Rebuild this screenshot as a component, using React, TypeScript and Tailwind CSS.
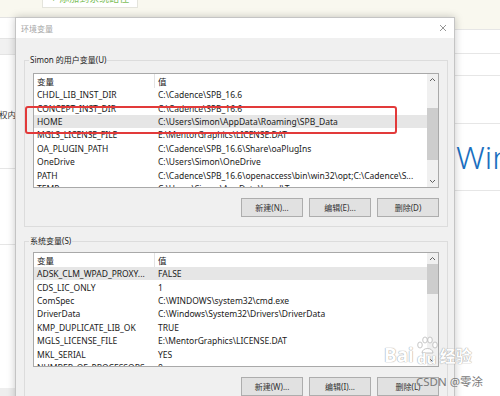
import React from "react";

type Row = [string, string];

const userRows: Row[] = [
  ["CHDL_LIB_INST_DIR", "C:\\Cadence\\SPB_16.6"],
  ["CONCEPT_INST_DIR", "C:\\Cadence\\SPB_16.6"],
  ["HOME", "C:\\Users\\Simon\\AppData\\Roaming\\SPB_Data"],
  ["MGLS_LICENSE_FILE", "E:\\MentorGraphics\\LICENSE.DAT"],
  ["OA_PLUGIN_PATH", "C:\\Cadence\\SPB_16.6\\Share\\oaPlugIns"],
  ["OneDrive", "C:\\Users\\Simon\\OneDrive"],
  ["PATH", "C:\\Cadence\\SPB_16.6\\openaccess\\bin\\win32\\opt;C:\\Cadence\\S..."],
  ["TEMP", "C:\\Users\\Simon\\AppData\\Local\\Temp"],
];

const sysRows: Row[] = [
  ["ADSK_CLM_WPAD_PROXY...", "FALSE"],
  ["CDS_LIC_ONLY", "1"],
  ["ComSpec", "C:\\WINDOWS\\system32\\cmd.exe"],
  ["DriverData", "C:\\Windows\\System32\\Drivers\\DriverData"],
  ["KMP_DUPLICATE_LIB_OK", "TRUE"],
  ["MGLS_LICENSE_FILE", "E:\\MentorGraphics\\LICENSE.DAT"],
  ["MKL_SERIAL", "YES"],
  ["NUMBER_OF_PROCESSORS", "8"],
];

function Chevron({ up }: { up: boolean }) {
  return (
    <svg width="7" height="5" viewBox="0 0 7 5">
      <polyline
        points={up ? "1,4 3.5,1.5 6,4" : "1,1 3.5,3.5 6,1"}
        fill="none"
        stroke="#606060"
        strokeWidth="1"
      />
    </svg>
  );
}

function VarList({
  rows,
  selected,
  thumbClass,
}: {
  rows: Row[];
  selected: number;
  thumbClass: string;
}) {
  return (
    <div className="flex h-[115px] border border-[#a9a9a9] bg-white">
      <div className="min-w-0 flex-1 overflow-hidden">
        <div className="flex h-[14px] items-center">
          <div className="flex h-full w-[121px] shrink-0 items-center border-r border-[#e3e3e3] pl-[3px]">
            变量
          </div>
          <div className="pl-[3px]">值</div>
        </div>
        {rows.map(([k, v], i) => (
          <div
            key={k}
            className={
              i === selected
                ? "flex h-[13.4px] items-center bg-[#e6e6e6]"
                : "flex h-[13.4px] items-center"
            }
          >
            <div className="w-[121px] shrink-0 overflow-hidden whitespace-nowrap pl-[3px]">{k}</div>
            <div className="whitespace-nowrap pl-[3px]">{v}</div>
          </div>
        ))}
      </div>
      <div className="flex w-[11px] shrink-0 flex-col bg-[#f0f0f0]">
        <div className="flex h-[11px] items-center justify-center">
          <Chevron up />
        </div>
        <div className="flex-1">
          <div className={thumbClass} />
        </div>
        <div className="flex h-[11px] items-center justify-center">
          <Chevron up={false} />
        </div>
      </div>
    </div>
  );
}

function Btn({ label }: { label: string }) {
  return (
    <div className="flex h-[19px] w-[62px] items-center justify-center border border-[#adadad] bg-[#e1e1e1] text-[8px] text-[#333]">
      {label}
    </div>
  );
}

export default function App() {
  return (
    <div className="relative h-[396px] w-[500px] overflow-hidden bg-white font-['Noto_Sans','Noto_Sans_CJK_SC',sans-serif] text-[8.5px] leading-[13px] text-[#1a1a1a]">
      {/* top strip of the page behind */}
      <div className="flex h-[17px] bg-[#f9f8ef]">
        <div className="ml-[42px] flex h-[8px] w-[96px] items-end justify-center overflow-hidden border-x border-b border-[#e4e4dc] bg-white pb-[3px]">
          <span className="text-[10px] leading-[12px] text-[#7cc05a]">+ 添加到系统路径</span>
        </div>
      </div>

      {/* page behind the dialog */}
      <div className="flex h-[379px]">
        <div className="flex w-[15px] flex-col border-t border-[#e2e2e2]">
          <div className="h-[20px]" />
          <div className="h-[17px] border-y border-[#e4e4e4] bg-[#f1f1f1]" />
          <div className="h-[53px]" />
          <div className="-ml-[1px] h-[14px] whitespace-nowrap text-[8.5px] text-[#333]">权内容</div>
          <div className="h-[46px]" />
          <div className="h-[76px] border-t border-[#e6e6e6]" />
          <div className="h-[144px] border-t border-[#e6e6e6]" />
          <div className="flex-1 bg-[#eeeeee]" />
        </div>
        <div className="flex-1" />
        <div className="flex w-[45px] flex-col">
          <div className="h-[12px] bg-[#f9f8ef]" />
          <div className="h-[24px] border-t border-[#e6e6e6]" />
          <div className="h-[22px] border-t border-[#e6e6e6]" />
          <div className="h-[48px] border-t border-[#e6e6e6]" />
          <div className="flex h-[67px] items-center overflow-hidden whitespace-nowrap border-t border-[#e6e6e6] pl-[1px] text-[32px] font-light leading-none text-[#1a6fc0]">
            Windows
          </div>
          <div className="flex-1 border-t border-[#e6e6e6]" />
        </div>
      </div>

      {/* dialog window */}
      <div className="absolute left-[15px] top-[17px] flex h-[390px] w-[440px] flex-col border border-[#c4c4c4] bg-[#f0f0f0] shadow-[0_0_8px_rgba(0,0,0,0.22)]">
        <div className="flex h-[20px] shrink-0 items-center justify-between bg-white pl-[5px] pr-[7px]">
          <span className="text-[8px] text-[#a5a5a5]">环境变量</span>
          <svg width="8" height="8" viewBox="0 0 8 8">
            <path d="M1 1 L7 7 M7 1 L1 7" stroke="#8a8a8a" strokeWidth="0.9" />
          </svg>
        </div>

        <div className="flex flex-col pl-[8px] pr-[6px] pt-[16px]">
          <fieldset className="border border-[#dcdcdc] px-0 pb-[9px]">
            <legend className="ml-[4px] px-[1px] text-[8px] leading-[12px] text-[#222]">
              Simon 的用户变量(U)
            </legend>
            <div className="px-[8px] pt-[7px]">
              <VarList rows={userRows} selected={2} thumbClass="mt-[23px] h-[52px] bg-[#cdcdcd]" />
              <div className="mt-[10px] flex justify-end gap-[6px]">
                <Btn label="新建(N)..." />
                <Btn label="编辑(E)..." />
                <Btn label="删除(D)" />
              </div>
            </div>
          </fieldset>

          <fieldset className="mt-[8px] border border-[#dcdcdc] px-0 pb-[9px]">
            <legend className="ml-[4px] px-[1px] text-[8px] leading-[12px] text-[#222]">
              系统变量(S)
            </legend>
            <div className="px-[8px] pt-[5px]">
              <VarList rows={sysRows} selected={0} thumbClass="mt-0 h-[30px] bg-[#cdcdcd]" />
              <div className="mt-[10px] flex justify-end gap-[6px]">
                <Btn label="新建(W)..." />
                <Btn label="编辑(I)..." />
                <Btn label="删除(L)" />
              </div>
            </div>
          </fieldset>
        </div>
      </div>

      {/* red annotation */}
      <div className="absolute left-[25px] top-[106px] h-[28px] w-[372px] rounded-[3px] border-2 border-[#e23a3a]" />

      {/* Baidu watermark */}
      <div className="absolute left-[384px] top-[336px] flex items-end opacity-90">
        <span className="text-[19px] font-bold leading-[22px] text-white [text-shadow:0_0_1px_#9a9a9a,0_0_1px_#9a9a9a]">
          Bai
        </span>
        <div className="flex flex-col items-center">
          <svg width="26" height="18" viewBox="0 0 26 18">
            <g fill="#ffffff" stroke="#a8a8a8" strokeWidth="0.7">
              <ellipse cx="6" cy="9" rx="2.3" ry="3" />
              <ellipse cx="11" cy="4" rx="2.3" ry="3" />
              <ellipse cx="16" cy="4" rx="2.3" ry="3" />
              <ellipse cx="21" cy="9" rx="2.3" ry="3" />
              <path d="M8 17 C8 11 19 11 19 17 Z" />
            </g>
          </svg>
          <span className="-mt-[4px] text-[15px] font-bold leading-[16px] text-white [text-shadow:0_0_1px_#9a9a9a,0_0_1px_#9a9a9a]">
            du
          </span>
        </div>
        <span className="text-[16px] font-bold leading-[20px] text-white [text-shadow:0_0_1px_#9a9a9a,0_0_1px_#9a9a9a]">
          经验
        </span>
      </div>

      {/* CSDN watermark */}
      <div className="absolute left-[416px] top-[375px] whitespace-nowrap text-[11.5px] leading-[14px] text-[#7a7a7a]">
        CSDN @零涂
      </div>
    </div>
  );
}
